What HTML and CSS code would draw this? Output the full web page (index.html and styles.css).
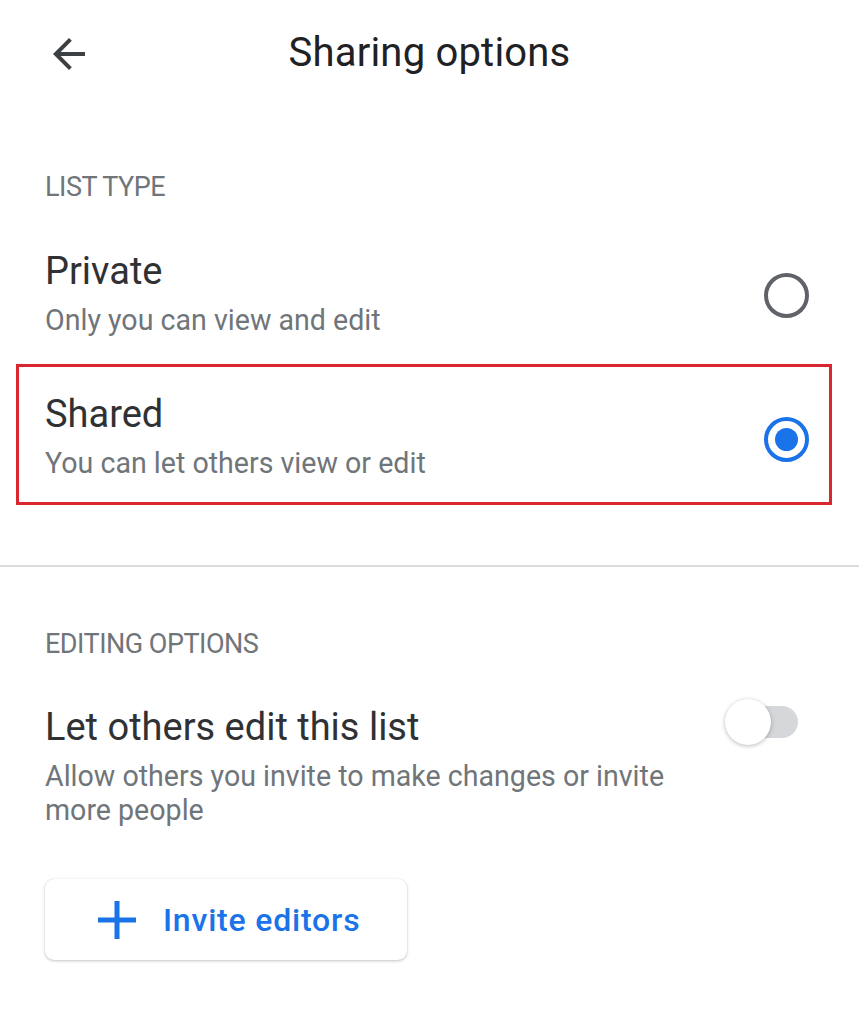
FILE: index.html
```html
<!DOCTYPE html>
<html lang="en">
<head>
<meta charset="utf-8">
<title>Sharing options</title>
<link rel="stylesheet" href="styles.css">
</head>
<body>
<div class="screen">
  <header class="topbar">
    <button class="back" aria-label="Back">
      <svg viewBox="0 0 24 24" width="48" height="48"><path d="M20 11H7.83l5.59-5.59L12 4l-8 8 8 8 1.41-1.41L7.83 13H20v-2z" fill="#3c4043"/></svg>
    </button>
    <h1 class="title">Sharing options</h1>
  </header>

  <section class="section first">
    <div class="label">LIST TYPE</div>
    <div class="row">
      <div class="text">
        <div class="row-title">Private</div>
        <div class="row-sub">Only you can view and edit</div>
      </div>
      <span class="radio"></span>
    </div>
    <div class="row highlighted">
      <div class="text">
        <div class="row-title">Shared</div>
        <div class="row-sub">You can let others view or edit</div>
      </div>
      <span class="radio checked"></span>
    </div>
  </section>

  <hr class="divider">

  <section class="section">
    <div class="label">EDITING OPTIONS</div>
    <div class="row edit-row">
      <div class="text">
        <div class="row-title">Let others edit this list</div>
        <div class="row-sub">Allow others you invite to make changes or invite more people</div>
      </div>
      <span class="switch"><span class="thumb"></span></span>
    </div>
    <button class="invite">
      <svg viewBox="0 0 40 40" width="40" height="40"><path d="M20 1v38M1 20h38" stroke="#1a73e8" stroke-width="5" fill="none"/></svg>
      <span>Invite editors</span>
    </button>
  </section>
</div>
</body>
</html>
```

FILE: styles.css
```css
* { box-sizing: border-box; }
html, body { margin: 0; padding: 0; background: #fff; }
body { font-family: Roboto, "Liberation Sans", Arial, sans-serif; color: #3c4043; }
.screen { width: 859px; min-height: 1024px; }

.topbar {
  height: 108px;
  display: flex;
  align-items: center;
}
.back {
  border: 0; background: none; padding: 0;
  margin-left: 45px;
  width: 48px; height: 48px;
  display: flex;
}
.title {
  margin: 0;
  flex: 1;
  text-align: center;
  margin-right: 93px;
  font-size: 40px;
  line-height: 48px;
  font-weight: 400;
  letter-spacing: 0.2px;
  color: #202124;
  padding-bottom: 2px;
}

.section { padding-top: 63px; }
.label {
  padding-left: 45px;
  font-size: 27px;
  line-height: 32px;
  letter-spacing: -0.5px;
  color: #70757a;
}

.row {
  display: flex;
  align-items: center;
  padding: 28px 50px 26px 45px;
  position: relative;
}
.first .label { margin-bottom: 18px; }
.text { flex: 1; }
.row-title {
  font-size: 38px;
  line-height: 44px;
  font-weight: 400;
  color: #303134;
}
.row-sub {
  margin-top: 9px;
  font-size: 28.6px;
  line-height: 36px;
  color: #70757a;
}
.radio {
  width: 45px; height: 45px;
  border-radius: 50%;
  border: 4px solid #5f6368;
  flex: none;
  position: relative;
  margin-top: 4px;
}
.radio.checked { border-color: #1a73e8; margin-top: 6px; }
.radio.checked::after {
  content: "";
  position: absolute;
  inset: 7px;
  border-radius: 50%;
  background: #1a73e8;
}
.highlighted::after {
  content: "";
  position: absolute;
  left: 16px; right: 27px; top: 0; bottom: 2px;
  border: 3px solid #d9262f;
  pointer-events: none;
}

.divider {
  border: 0;
  height: 2px;
  background: #dadce0;
  margin: 58px 0 0;
}
.divider + .section { padding-top: 61px; }

.edit-row { padding: 45px 61px 0 45px; align-items: flex-start; }
.edit-row .text { flex: none; width: 640px; }
.edit-row .row-sub { margin-top: 10px; line-height: 34px; }
.switch {
  margin-left: auto;
  margin-top: 1px;
  width: 64px; height: 32px;
  border-radius: 16px;
  background: #d5d7db;
  position: relative;
  flex: none;
}
.thumb {
  position: absolute;
  left: -9px; top: -7px;
  width: 46px; height: 46px;
  border-radius: 50%;
  background: #fff;
  box-shadow: 0 1px 4px rgba(0,0,0,0.28);
}

.invite {
  margin: 52px 0 0 45px;
  width: 362px; height: 81px;
  border: 0;
  border-radius: 9px;
  background: #fff;
  box-shadow: 0 1px 3px rgba(60,64,67,0.3), 0 0 1px rgba(60,64,67,0.15);
  display: flex;
  align-items: center;
  padding: 0 0 0 52px;
  gap: 26px;
  font-family: Roboto, "Liberation Sans", Arial, sans-serif;
  font-size: 32px;
  font-weight: 500;
  letter-spacing: 0.8px;
  color: #1a73e8;
}
```
